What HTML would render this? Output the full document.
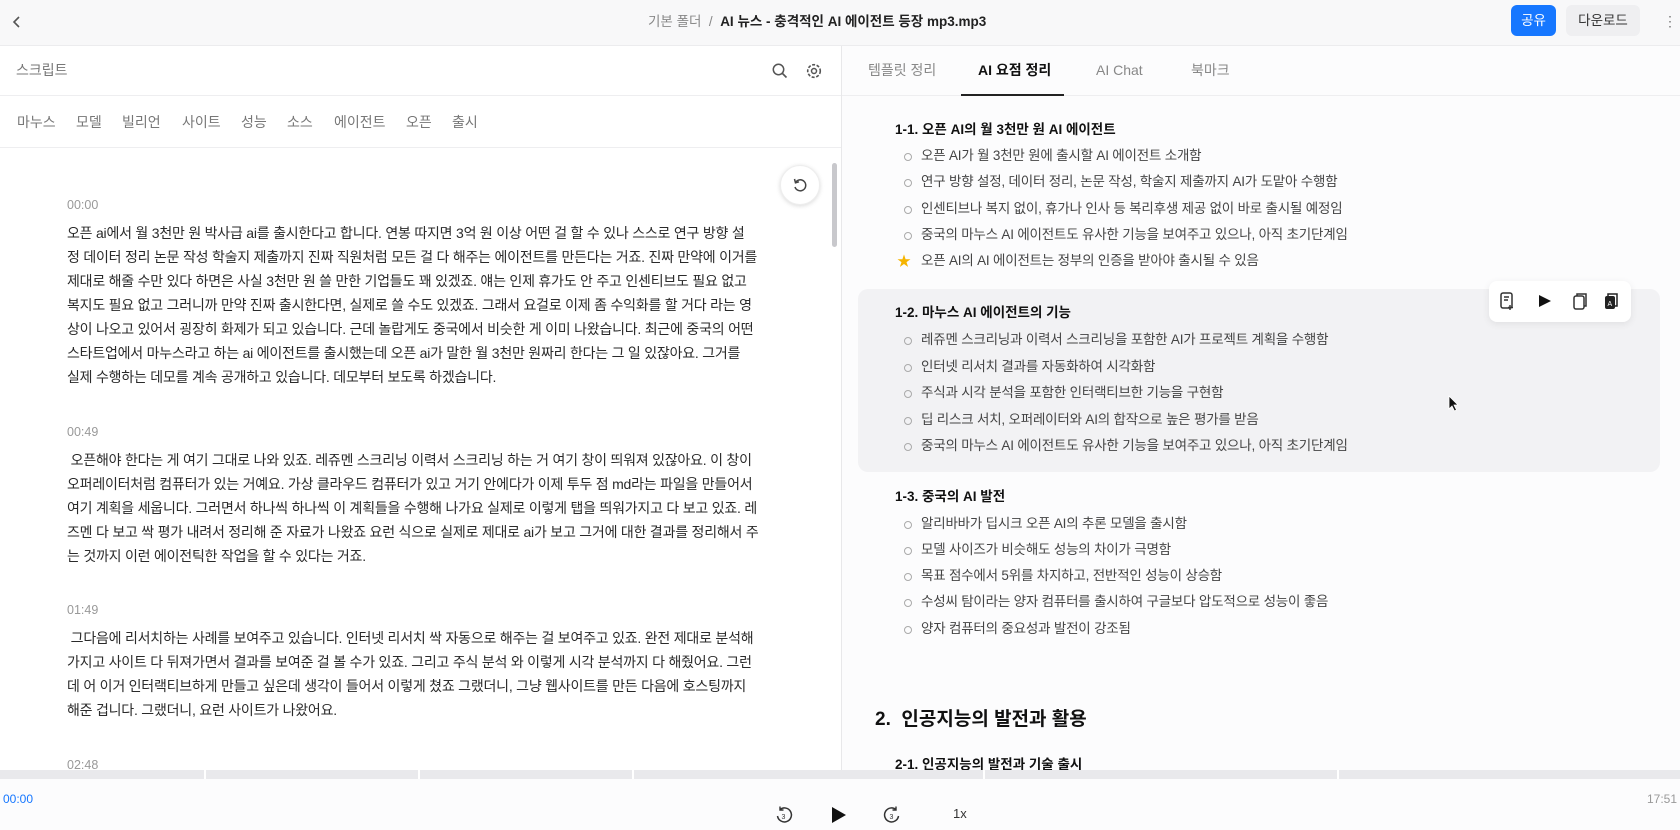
<!DOCTYPE html>
<html><head><meta charset="utf-8">
<style>
*{margin:0;padding:0;box-sizing:border-box}
body{width:1680px;height:830px;overflow:hidden;background:#fcfcfd;font-family:"Liberation Sans","Noto Sans CJK KR",sans-serif;color:#222;position:relative}
.a{position:absolute;white-space:nowrap}
.hdr{position:absolute;left:0;top:0;width:1680px;height:46px;background:#f8f8f9;border-bottom:1px solid #ececee}
.ln{position:absolute;left:67px;font-size:14px;color:#2a2a2a;letter-spacing:-0.22px;white-space:nowrap;line-height:20px}
.ts{position:absolute;left:67px;font-size:12.5px;color:#999;line-height:16px}
.kw{position:absolute;top:113px;font-size:14px;color:#777;line-height:18px}
.h3{position:absolute;left:895px;font-size:13.5px;font-weight:bold;color:#111;white-space:nowrap;line-height:18px}
.li{position:absolute;left:921px;font-size:13.5px;color:#444;white-space:nowrap;line-height:18px;letter-spacing:-0.2px}
.li:before{content:"";position:absolute;left:-17px;top:6px;width:6px;height:6px;border:1.2px solid #aaa;border-radius:50%}
.li.nb:before{display:none}
.tab{position:absolute;top:61px;font-size:14px;color:#888;line-height:18px}
</style></head><body>
<div class="hdr"></div>
<svg class="a" style="left:10px;top:14px" width="14" height="16" viewBox="0 0 14 16"><path d="M9 3 L4 8 L9 13" stroke="#555" stroke-width="1.6" fill="none"/></svg>
<div class="a" style="left:648px;top:13px;font-size:13.5px;color:#888;line-height:18px">기본 폴더 &nbsp;/&nbsp; <span style="color:#222;font-weight:bold">AI 뉴스 - 충격적인 AI 에이전트 등장 mp3.mp3</span></div>
<div class="a" style="left:1511px;top:5px;width:45px;height:31px;background:#1677ff;border-radius:6px;color:#fff;font-size:13.5px;text-align:center;line-height:31px">공유</div>
<div class="a" style="left:1566px;top:5px;width:74px;height:31px;background:#efeff1;border-radius:6px;color:#333;font-size:13.5px;text-align:center;line-height:31px">다운로드</div>
<div class="a" style="left:1663px;top:12px;font-size:14px;color:#777;line-height:18px">⋮</div>

<div class="a" style="left:841px;top:46px;width:1px;height:724px;background:#e8e8ea"></div>
<div class="a" style="left:0;top:46px;width:841px;height:724px;background:#fff"></div>
<div class="a" style="left:16px;top:61px;font-size:14px;color:#777;line-height:18px">스크립트</div>
<svg class="a" style="left:771px;top:62px" width="18" height="18" viewBox="0 0 18 18"><circle cx="7.5" cy="7.5" r="5.2" stroke="#555" stroke-width="1.5" fill="none"/><path d="M11.5 11.5 L15.5 15.5" stroke="#555" stroke-width="1.6"/></svg>
<svg class="a" style="left:805px;top:62px" width="18" height="18" viewBox="0 0 18 18"><circle cx="9" cy="9" r="6.3" stroke="#555" stroke-width="1.6" fill="none" stroke-dasharray="3 1.6"/><circle cx="9" cy="9" r="2.5" stroke="#555" stroke-width="1.5" fill="none"/></svg>
<div class="a" style="left:0;top:95px;width:841px;height:1px;background:#eeeef0"></div>
<div class="kw" style="left:17px">마누스</div><div class="kw" style="left:76px">모델</div><div class="kw" style="left:122px">빌리언</div><div class="kw" style="left:182px">사이트</div><div class="kw" style="left:241px">성능</div><div class="kw" style="left:287px">소스</div><div class="kw" style="left:334px">에이전트</div><div class="kw" style="left:406px">오픈</div><div class="kw" style="left:452px">출시</div>
<div class="a" style="left:0;top:147px;width:841px;height:1px;background:#eeeef0"></div>

<div class="ts" style="top:197px">00:00</div>
<div class="ln" style="top:223px">오픈 ai에서 월 3천만 원 박사급 ai를 출시한다고 합니다. 연봉 따지면 3억 원 이상 어떤 걸 할 수 있나 스스로 연구 방향 설</div>
<div class="ln" style="top:247px">정 데이터 정리 논문 작성 학술지 제출까지 진짜 직원처럼 모든 걸 다 해주는 에이전트를 만든다는 거죠. 진짜 만약에 이거를</div>
<div class="ln" style="top:271px">제대로 해줄 수만 있다 하면은 사실 3천만 원 쓸 만한 기업들도 꽤 있겠죠. 얘는 인제 휴가도 안 주고 인센티브도 필요 없고</div>
<div class="ln" style="top:295px">복지도 필요 없고 그러니까 만약 진짜 출시한다면, 실제로 쓸 수도 있겠죠. 그래서 요걸로 이제 좀 수익화를 할 거다 라는 영</div>
<div class="ln" style="top:319px">상이 나오고 있어서 굉장히 화제가 되고 있습니다. 근데 놀랍게도 중국에서 비슷한 게 이미 나왔습니다. 최근에 중국의 어떤</div>
<div class="ln" style="top:343px">스타트업에서 마누스라고 하는 ai 에이전트를 출시했는데 오픈 ai가 말한 월 3천만 원짜리 한다는 그 일 있잖아요. 그거를</div>
<div class="ln" style="top:367px">실제 수행하는 데모를 계속 공개하고 있습니다. 데모부터 보도록 하겠습니다.</div>

<div class="ts" style="top:424px">00:49</div>
<div class="ln" style="top:450px">&nbsp;오픈해야 한다는 게 여기 그대로 나와 있죠. 레쥬멘 스크리닝 이력서 스크리닝 하는 거 여기 창이 띄워져 있잖아요. 이 창이</div>
<div class="ln" style="top:474px">오퍼레이터처럼 컴퓨터가 있는 거예요. 가상 클라우드 컴퓨터가 있고 거기 안에다가 이제 투두 점 md라는 파일을 만들어서</div>
<div class="ln" style="top:498px">여기 계획을 세웁니다. 그러면서 하나씩 하나씩 이 계획들을 수행해 나가요 실제로 이렇게 탭을 띄워가지고 다 보고 있죠. 레</div>
<div class="ln" style="top:522px">즈멘 다 보고 싹 평가 내려서 정리해 준 자료가 나왔죠 요런 식으로 실제로 제대로 ai가 보고 그거에 대한 결과를 정리해서 주</div>
<div class="ln" style="top:546px">는 것까지 이런 에이전틱한 작업을 할 수 있다는 거죠.</div>

<div class="ts" style="top:602px">01:49</div>
<div class="ln" style="top:628px">&nbsp;그다음에 리서치하는 사례를 보여주고 있습니다. 인터넷 리서치 싹 자동으로 해주는 걸 보여주고 있죠. 완전 제대로 분석해</div>
<div class="ln" style="top:652px">가지고 사이트 다 뒤져가면서 결과를 보여준 걸 볼 수가 있죠. 그리고 주식 분석 와 이렇게 시각 분석까지 다 해줬어요. 그런</div>
<div class="ln" style="top:676px">데 어 이거 인터랙티브하게 만들고 싶은데 생각이 들어서 이렇게 쳤죠 그랬더니, 그냥 웹사이트를 만든 다음에 호스팅까지</div>
<div class="ln" style="top:700px">해준 겁니다. 그랬더니, 요런 사이트가 나왔어요.</div>
<div class="ts" style="top:757px">02:48</div>

<div class="a" style="left:832px;top:163px;width:5px;height:84px;background:#c8c8cc;border-radius:3px"></div>
<div class="a" style="left:780px;top:165px;width:40px;height:40px;background:#fff;border-radius:50%;box-shadow:0 1px 5px rgba(0,0,0,.15);border:1px solid #eee"></div>
<svg class="a" style="left:791px;top:176px" width="18" height="18" viewBox="0 0 18 18"><path d="M4.5 6.5 A5.5 5.5 0 1 1 4 11" stroke="#444" stroke-width="1.5" fill="none"/><path d="M3.5 3 L4.5 6.8 L8 5.8" stroke="#444" stroke-width="1.5" fill="none"/></svg>

<div class="tab" style="left:868px">템플릿 정리</div>
<div class="tab" style="left:978px;color:#111;font-weight:bold">AI 요점 정리</div>
<div class="tab" style="left:1096px">AI Chat</div>
<div class="tab" style="left:1191px">북마크</div>
<div class="a" style="left:842px;top:95px;width:838px;height:1px;background:#eeeef0"></div>
<div class="a" style="left:961px;top:94px;width:103px;height:2px;background:#222"></div>

<div class="h3" style="top:121px">1-1. 오픈 AI의 월 3천만 원 AI 에이전트</div>
<div class="li" style="top:147px">오픈 AI가 월 3천만 원에 출시할 AI 에이전트 소개함</div>
<div class="li" style="top:173px">연구 방향 설정, 데이터 정리, 논문 작성, 학술지 제출까지 AI가 도맡아 수행함</div>
<div class="li" style="top:200px">인센티브나 복지 없이, 휴가나 인사 등 복리후생 제공 없이 바로 출시될 예정임</div>
<div class="li" style="top:226px">중국의 마누스 AI 에이전트도 유사한 기능을 보여주고 있으나, 아직 초기단계임</div>
<div class="a" style="left:897px;top:252px;font-size:14px;color:#f5b400;line-height:18px">★</div>
<div class="li nb" style="top:252px">오픈 AI의 AI 에이전트는 정부의 인증을 받아야 출시될 수 있음</div>

<div class="a" style="left:858px;top:289px;width:802px;height:183px;background:#f2f2f4;border-radius:10px"></div>
<div class="h3" style="top:304px">1-2. 마누스 AI 에이전트의 기능</div>
<div class="li" style="top:331px">레쥬멘 스크리닝과 이력서 스크리닝을 포함한 AI가 프로젝트 계획을 수행함</div>
<div class="li" style="top:358px">인터넷 리서치 결과를 자동화하여 시각화함</div>
<div class="li" style="top:384px">주식과 시각 분석을 포함한 인터랙티브한 기능을 구현함</div>
<div class="li" style="top:411px">딥 리스크 서치, 오퍼레이터와 AI의 합작으로 높은 평가를 받음</div>
<div class="li" style="top:437px">중국의 마누스 AI 에이전트도 유사한 기능을 보여주고 있으나, 아직 초기단계임</div>
<div class="a" style="left:1489px;top:281px;width:142px;height:41px;background:#fff;border-radius:8px;box-shadow:0 2px 8px rgba(0,0,0,.08)"></div>
<svg class="a" style="left:1499px;top:291px" width="124" height="20" viewBox="0 0 124 20"><rect x="2" y="2" width="11" height="15" rx="2" stroke="#333" stroke-width="1.5" fill="none"/><path d="M5 6h5M5 9h4M11 14v5M9 16.5h5" stroke="#333" stroke-width="1.4"/><path d="M40 4 L52 10 L40 16Z" fill="#111"/><rect x="75" y="5" width="10" height="13" rx="2" stroke="#333" stroke-width="1.5" fill="none"/><path d="M78 5V3h9v12h-2" stroke="#333" stroke-width="1.5" fill="none"/><rect x="106" y="5" width="10" height="13" rx="2" fill="#222"/><path d="M109 5V3h9v12h-2" stroke="#222" stroke-width="1.5" fill="none"/><text x="108.5" y="15" font-size="7" fill="#fff" font-family="Liberation Sans">A</text></svg>
<svg class="a" style="left:1448px;top:395px" width="12" height="18" viewBox="0 0 12 18"><path d="M1 1 L1 14 L4 11 L6.5 16 L8.5 15 L6 10 L10 10 Z" fill="#111" stroke="#fff" stroke-width="0.8"/></svg>

<div class="h3" style="top:488px">1-3. 중국의 AI 발전</div>
<div class="li" style="top:515px">알리바바가 딥시크 오픈 AI의 추론 모델을 출시함</div>
<div class="li" style="top:541px">모델 사이즈가 비슷해도 성능의 차이가 극명함</div>
<div class="li" style="top:567px">목표 점수에서 5위를 차지하고, 전반적인 성능이 상승함</div>
<div class="li" style="top:593px">수성씨 탐이라는 양자 컴퓨터를 출시하여 구글보다 압도적으로 성능이 좋음</div>
<div class="li" style="top:620px">양자 컴퓨터의 중요성과 발전이 강조됨</div>

<div class="a" style="left:875px;top:708px;font-size:19px;font-weight:bold;color:#111;line-height:24px">2.&nbsp; 인공지능의 발전과 활용</div>
<div class="h3" style="top:756px">2-1. 인공지능의 발전과 기술 출시</div>

<div class="a" style="left:0;top:770px;width:1680px;height:60px;background:#fcfcfd"></div>
<div class="a" style="left:0;top:770px;width:1680px;height:9px;background:#e9e9ec"></div>
<div class="a" style="left:204px;top:770px;width:2px;height:9px;background:#fff"></div>
<div class="a" style="left:418px;top:770px;width:2px;height:9px;background:#fff"></div>
<div class="a" style="left:632px;top:770px;width:2px;height:9px;background:#fff"></div>
<div class="a" style="left:983px;top:770px;width:2px;height:9px;background:#fff"></div>
<div class="a" style="left:1337px;top:770px;width:2px;height:9px;background:#fff"></div>
<div class="a" style="left:3px;top:791px;font-size:12px;color:#1677ff;line-height:16px">00:00</div>
<div class="a" style="left:1647px;top:791px;font-size:12px;color:#999;line-height:16px">17:51</div>
<svg class="a" style="left:774px;top:805px" width="20" height="20" viewBox="0 0 20 20"><path d="M6 4.5 A7 7 0 1 1 3.5 11" stroke="#333" stroke-width="1.5" fill="none"/><path d="M6 1.5 L6 5 L9.5 5" stroke="#333" stroke-width="1.4" fill="none"/><text x="7.5" y="14" font-size="7" fill="#333" font-family="Liberation Sans">3</text></svg>
<svg class="a" style="left:829px;top:805px" width="20" height="20" viewBox="0 0 20 20"><path d="M3 2 L17 10 L3 18Z" fill="#111"/></svg>
<svg class="a" style="left:882px;top:805px" width="20" height="20" viewBox="0 0 20 20"><path d="M14 4.5 A7 7 0 1 0 16.5 11" stroke="#333" stroke-width="1.5" fill="none"/><path d="M14 1.5 L14 5 L10.5 5" stroke="#333" stroke-width="1.4" fill="none"/><text x="7.5" y="14" font-size="7" fill="#333" font-family="Liberation Sans">3</text></svg>
<div class="a" style="left:953px;top:806px;font-size:13px;color:#333;line-height:16px">1x</div>
</body></html>
